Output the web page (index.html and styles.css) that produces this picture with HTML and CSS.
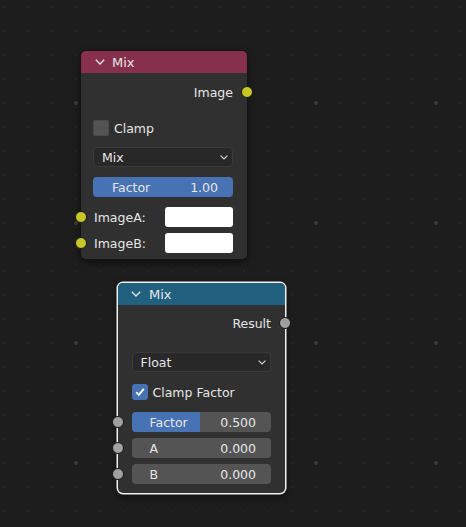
FILE: index.html
```html
<!DOCTYPE html>
<html>
<head>
<meta charset="utf-8">
<link rel="stylesheet" href="styles.css">
</head>
<body>
<div class="canvas">
  <div class="node node-color">
    <div class="header header-color">
      <svg class="collapse" width="10" height="6" viewBox="0 0 10 6"><path d="M0.8 0.8 L5 5 L9.2 0.8" fill="none" stroke="#e6e6e6" stroke-width="1.3"/></svg>
      <span>Mix</span>
    </div>
    <div class="body body-a">
      <div class="row out"><span>Image</span><i class="socket sock-out yellow"></i></div>
      <div class="row check-row clamp-a"><span class="checkbox"></span><span>Clamp</span></div>
      <div class="dropdown dd-a"><span>Mix</span><svg width="8" height="5" viewBox="0 0 8 5"><path d="M0.6 0.6 L4 4 L7.4 0.6" fill="none" stroke="#d0d0d0" stroke-width="1.2"/></svg></div>
      <div class="field slider full mt10"><span class="lbl">Factor</span><span class="val">1.00</span></div>
      <div class="row in mt10"><i class="socket sock-in yellow"></i><span class="in-lbl">ImageA:</span><span class="swatch"></span></div>
      <div class="row in mt6"><i class="socket sock-in yellow"></i><span class="in-lbl">ImageB:</span><span class="swatch"></span></div>
    </div>
  </div>

  <div class="node node-conv selected">
    <div class="header header-conv">
      <svg class="collapse" width="10" height="6" viewBox="0 0 10 6"><path d="M0.8 0.8 L5 5 L9.2 0.8" fill="none" stroke="#e6e6e6" stroke-width="1.3"/></svg>
      <span>Mix</span>
    </div>
    <div class="body body-b">
      <div class="row out"><span>Result</span><i class="socket sock-out grey"></i></div>
      <div class="dropdown dd-b"><span>Float</span><svg width="8" height="5" viewBox="0 0 8 5"><path d="M0.6 0.6 L4 4 L7.4 0.6" fill="none" stroke="#d0d0d0" stroke-width="1.2"/></svg></div>
      <div class="row check-row mt10"><span class="checkbox checked"><svg width="12" height="12" viewBox="0 0 12 12"><path d="M2.2 6.2 L4.8 8.8 L9.8 2.8" fill="none" stroke="#ffffff" stroke-width="1.8"/></svg></span><span>Clamp Factor</span></div>
      <div class="field slider mt10"><i class="socket sock-in grey"></i><span class="fill" style="width:49%"></span><span class="lbl">Factor</span><span class="val">0.500</span></div>
      <div class="field mt6"><i class="socket sock-in grey"></i><span class="lbl">A</span><span class="val">0.000</span></div>
      <div class="field mt6"><i class="socket sock-in grey"></i><span class="lbl">B</span><span class="val">0.000</span></div>
    </div>
  </div>
</div>
</body>
</html>
```

FILE: styles.css
```css
html, body {
  margin: 0;
  padding: 0;
  background: #1d1d1d;
}

.canvas {
  position: relative;
  width: 466px;
  height: 527px;
  overflow: hidden;
  font-family: "DejaVu Sans", "Liberation Sans", sans-serif;
  font-size: 12.5px;
  color: #e6e6e6;
  background-color: #1d1d1d;
  background-image:
    radial-gradient(circle, #3a3a3a 0, #3a3a3a 1.6px, transparent 2.2px),
    radial-gradient(circle, #262626 0, #262626 0.9px, transparent 1.4px);
  background-size: 120px 120px, 24px 24px;
  background-position: 16px 43px, 16px 19px;
}

.node {
  position: absolute;
  background: #303030;
  border-radius: 5px;
  box-shadow: 0 0 0 1px #141414, 0 3px 8px rgba(0, 0, 0, 0.55);
}

.node-color {
  left: 81px;
  top: 51px;
  width: 166px;
}

.node-conv {
  left: 118px;
  top: 283px;
  width: 167px;
}

.selected {
  box-shadow: 0 0 0 1.5px #f0f0f0, 0 3px 8px rgba(0, 0, 0, 0.55);
}

.header {
  height: 22px;
  border-radius: 5px 5px 0 0;
  display: flex;
  align-items: center;
  gap: 7px;
  padding-left: 14px;
  font-size: 13px;
}

.header-color {
  background: #87304d;
}

.header-conv {
  background: #21607f;
  padding-left: 13px;
  gap: 8px;
}

.collapse {
  display: block;
}

.body {
  display: flex;
  flex-direction: column;
  padding: 0 14px 0 13px;
}

.body-a {
  padding-top: 9px;
  padding-bottom: 6px;
  padding-left: 12px;
}

.body-b {
  padding-top: 8px;
  padding-bottom: 9px;
  padding-left: 13.5px;
}

.row {
  position: relative;
  height: 20px;
  display: flex;
  align-items: center;
}

.out {
  justify-content: flex-end;
}

.socket {
  position: absolute;
  top: 50%;
  width: 12px;
  height: 12px;
  margin-top: -6px;
  border-radius: 50%;
  box-sizing: border-box;
  border: 1px solid #1a1a1a;
}

.sock-out {
  right: -20px;
}

.body-a .sock-in {
  left: -18px;
}

.body-b .sock-in {
  left: -19.5px;
}

.yellow {
  background: #c7c729;
}

.grey {
  background: #a1a1a1;
}

.check-row {
  gap: 5px;
}

.clamp-a {
  margin-top: 16px;
}

.checkbox {
  width: 16px;
  height: 16px;
  border-radius: 3px;
  background: #545454;
  box-shadow: inset 0 0 0 1px #4a4a4a;
  display: flex;
  align-items: center;
  justify-content: center;
}

.checkbox.checked {
  background: #4772b3;
  box-shadow: none;
}

.checkbox svg {
  display: block;
}

.dropdown {
  height: 20px;
  box-sizing: border-box;
  border-radius: 4px;
  background: #282828;
  border: 1px solid #3a3a3a;
  display: flex;
  align-items: center;
  justify-content: space-between;
  padding: 0 4px 0 8px;
}

.dropdown svg {
  display: block;
}

.dd-a {
  margin-top: 9px;
}

.dd-b {
  margin-top: 19px;
}

.field {
  position: relative;
  height: 20px;
  border-radius: 4px;
  background: #545454;
  display: flex;
  align-items: center;
  justify-content: space-between;
  padding: 0 15px 0 18px;
}

.field.full {
  background: #4772b3;
  padding-left: 19px;
}

.field .fill {
  position: absolute;
  left: 0;
  top: 0;
  bottom: 0;
  background: #4772b3;
  border-radius: 4px 0 0 4px;
}

.field .lbl,
.field .val {
  position: relative;
}

.mt10 {
  margin-top: 10px;
}

.mt6 {
  margin-top: 6px;
}

.in {
  justify-content: space-between;
  padding-left: 1px;
}

.swatch {
  width: 68px;
  height: 20px;
  border-radius: 3px;
  background: #ffffff;
}
```
